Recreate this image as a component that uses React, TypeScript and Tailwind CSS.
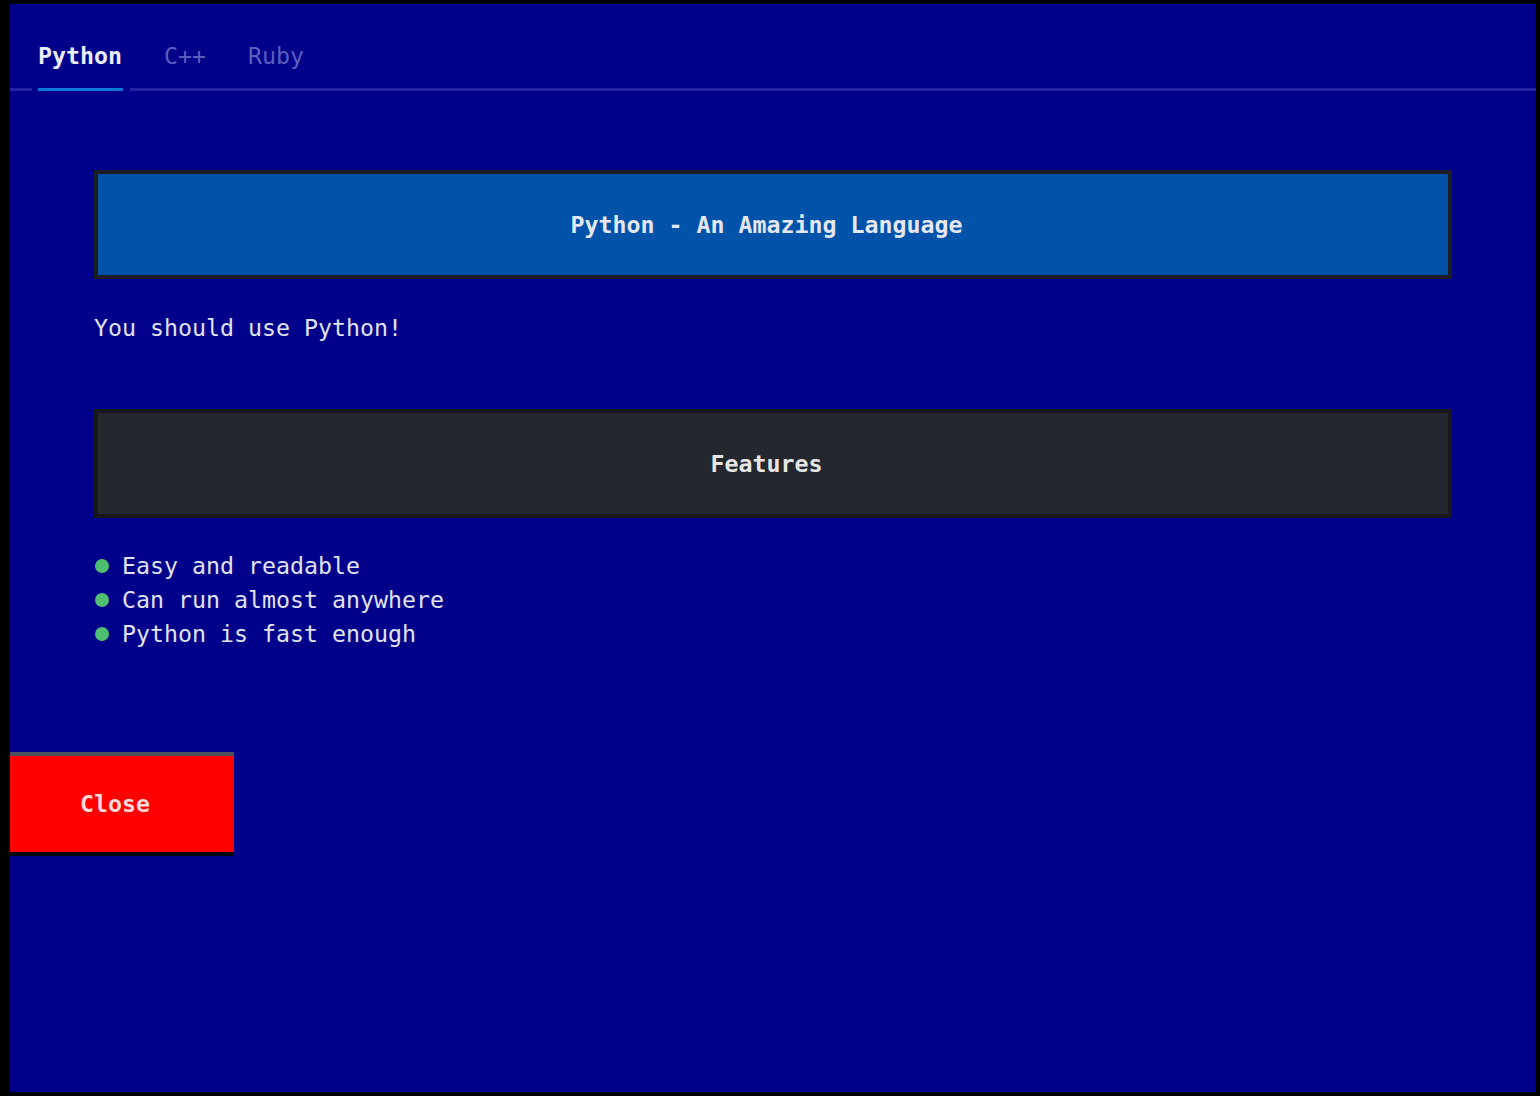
const features = ['Easy and readable', 'Can run almost anywhere', 'Python is fast enough']

function App() {
  return (
    <main className="h-[1096px] w-[1540px] bg-black pb-[4px] pl-[10px] pr-[4px] pt-[4px] font-['DejaVu_Sans_Mono',monospace] text-[23.25px] leading-[34px] text-[#e2e2f2]">
      <div className="flex h-full flex-col bg-[#00008b]">
        {/* tab bar */}
        <div className="flex h-[84px] gap-[42px] pl-[28px] pt-[35px]">
          <span className="h-[34px] font-bold text-[#ececf8]">Python</span>
          <span className="h-[34px] text-[#5d5dbd]">C++</span>
          <span className="h-[34px] text-[#5d5dbd]">Ruby</span>
        </div>
        <div className="flex h-[3px]">
          <div className="w-[22px] bg-[#2323a4]" />
          <div className="ml-[6px] w-[85px] bg-[#0a78d6]" />
          <div className="ml-[7px] flex-1 bg-[#2323a4]" />
        </div>

        {/* markdown body */}
        <div className="flex flex-col px-[84px] pt-[79px]">
          <div className="flex h-[109px] items-center justify-center border-[4px] border-[#1c1c24] bg-[#0053a9] pr-[13px] font-bold text-[#e6e6f0]">
            Python - An Amazing Language
          </div>
          <p className="mt-[32px] h-[34px]">You should use Python!</p>
          <div className="mt-[64px] flex h-[109px] items-center justify-center border-[4px] border-[#18181c] bg-[#24272e] pr-[13px] font-bold text-[#e6e6e6]">
            Features
          </div>
          <ul className="mt-[31px] flex flex-col">
            {features.map((f) => (
              <li key={f} className="flex h-[34px] items-center">
                <span className="ml-[1px] h-[14px] w-[14px] rounded-full bg-[#4ebf71]" />
                <span className="ml-[13px]">{f}</span>
              </li>
            ))}
          </ul>
        </div>

        <button className="mt-[101px] flex h-[104px] w-[224px] items-center border-b-[4px] border-t-[4px] border-b-[#07070f] border-t-[#4b5060] bg-[#ff0000] pl-[70px] font-bold text-[#ffd9d9]">
          Close
        </button>
      </div>
    </main>
  )
}

export default App
